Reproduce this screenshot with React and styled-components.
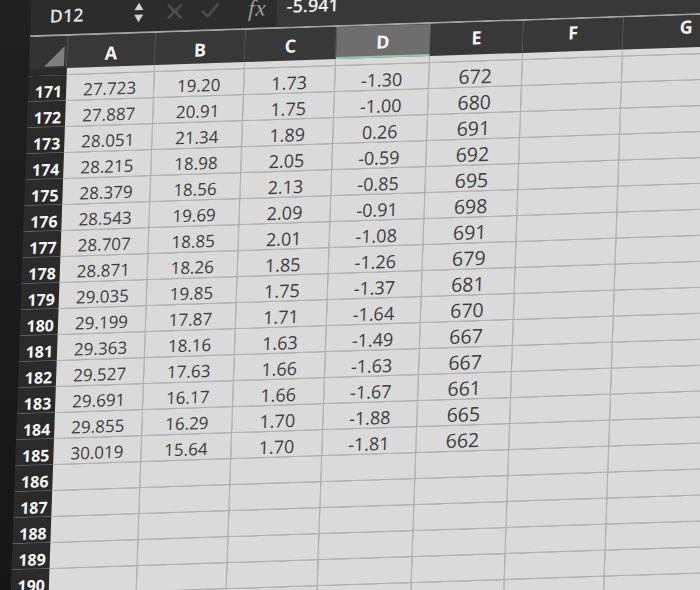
import React from 'react';
import styled, { createGlobalStyle } from 'styled-components';

const GlobalStyle = createGlobalStyle`
  html, body { margin: 0; padding: 0; background: #1b1b1b; overflow: hidden; }
  body { font-family: "Open Sans", "Liberation Sans", sans-serif; }
  * { box-sizing: border-box; }
`;

const COLS = '38px 88px 90px 91px 94px 93px 100px 126px';

const Screen = styled.div`
  width: 700px;
  height: 590px;
  overflow: hidden;
  background: linear-gradient(180deg, #202020 0%, #161616 100%);
`;

/* the photo is taken at an angle: the whole sheet is skewed */
const Sheet = styled.div`
  width: 760px;
  padding-left: 37px;
  transform-origin: 0 0;
  transform: translate(-5.4px, -5.5px) skew(-2deg, -1.9deg);
`;

const FormulaBar = styled.div`
  height: 42px;
  padding-top: 4px;
  display: flex;
  align-items: center;
  background: #2c2c2c;
`;

const NameBox = styled.div`
  width: 120px;
  height: 100%;
  display: flex;
  align-items: center;
  justify-content: space-between;
  padding: 0 7px 0 19px;
  color: #e2e2e2;
  font-size: 18px;
  font-weight: 600;
`;

const ToolIcon = styled.div`
  width: ${p => p.$w}px;
  height: 100%;
  display: flex;
  align-items: center;
  justify-content: ${p => p.$justify || 'center'};
  padding-right: ${p => p.$pr || 0}px;
`;

const Fx = styled.span`
  font-family: "Liberation Serif", "DejaVu Serif", serif;
  font-style: italic;
  font-size: 23px;
  color: #9c9c9c;
  letter-spacing: 1px;
`;

const FormulaInput = styled.div`
  flex: 1;
  align-self: stretch;
  display: flex;
  align-items: center;
  padding: 0 0 0 10px;
  margin: -4px 0 0 0;
  background: #383838;
  color: #f0f0f0;
  font-size: 18px;
  font-weight: 600;
  line-height: 1;
`;

const Row = styled.div`
  display: grid;
  grid-template-columns: ${COLS};
  grid-template-rows: ${p => p.$h}px;
  height: ${p => p.$h}px;
`;

const HeaderRow = styled(Row)`
  border-top: 2px solid #a4a4a4;
  grid-template-rows: ${p => p.$h - 2}px;
`;

const Corner = styled.div`
  position: relative;
  background: #333333;
  border-right: 1px solid #555;
  &::after {
    content: '';
    position: absolute;
    right: 2px;
    bottom: 2px;
    width: 0;
    height: 0;
    border-left: 20px solid transparent;
    border-bottom: 20px solid #7e7e7e;
  }
`;

const ColHead = styled.div`
  display: flex;
  align-items: center;
  justify-content: center;
  padding-top: ${p => Math.max(p.$shift, 0)}px;
  padding-bottom: ${p => Math.max(-p.$shift, 0)}px;
  background: ${p => (p.$selected ? '#6e6e6e' : '#383838')};
  border-right: 1px solid #5a5a5a;
  border-bottom: 2px solid ${p => (p.$selected ? '#8fc7ad' : '#383838')};
  color: #f4f4f4;
  font-size: 18px;
  font-weight: 700;
  line-height: 1;
`;

const RowHead = styled.div`
  display: flex;
  align-items: center;
  justify-content: flex-end;
  padding: 7px 4px 0 0;
  background: #2a2a2a;
  border-bottom: 1px solid ${p => (p.$spacer ? '#bdbdbd' : '#626262')};
  color: #f6f6f6;
  font-size: 16px;
  font-weight: 700;
  line-height: 1;
`;

const Cell = styled.div`
  display: flex;
  align-items: center;
  justify-content: center;
  padding-top: 4px;
  background: #dadada;
  border-right: 1px solid #ababab;
  border-bottom: 1px solid #ababab;
  color: #3e3e3e;
  font-size: ${p => p.$size}px;
  line-height: 1;
`;

const SIZES = [17, 17, 18, 18, 19.5, 19.5, 19.5];
const LETTERS = ['A', 'B', 'C', 'D', 'E', 'F', 'G'];
const HEAD_SHIFT = [6, 5, 4, 2, 0, -4, -8];

const DATA = [
  ['27.723', '19.20', '1.73', '-1.30', '672'],
  ['27.887', '20.91', '1.75', '-1.00', '680'],
  ['28.051', '21.34', '1.89', '0.26', '691'],
  ['28.215', '18.98', '2.05', '-0.59', '692'],
  ['28.379', '18.56', '2.13', '-0.85', '695'],
  ['28.543', '19.69', '2.09', '-0.91', '698'],
  ['28.707', '18.85', '2.01', '-1.08', '691'],
  ['28.871', '18.26', '1.85', '-1.26', '679'],
  ['29.035', '19.85', '1.75', '-1.37', '681'],
  ['29.199', '17.87', '1.71', '-1.64', '670'],
  ['29.363', '18.16', '1.63', '-1.49', '667'],
  ['29.527', '17.63', '1.66', '-1.63', '667'],
  ['29.691', '16.17', '1.66', '-1.67', '661'],
  ['29.855', '16.29', '1.70', '-1.88', '665'],
  ['30.019', '15.64', '1.70', '-1.81', '662'],
];

const rows = Array.from({ length: 23 }, (_, i) => ({
  n: 171 + i,
  vals: DATA[i] || [],
}));

const Stepper = () => (
  <svg width="10" height="22" viewBox="0 0 10 22">
    <polygon points="5,1 9.5,8.5 0.5,8.5" fill="#d2d2d2" />
    <polygon points="0.5,13 9.5,13 5,20.5" fill="#d2d2d2" />
  </svg>
);

const Cross = () => (
  <svg width="16" height="16" viewBox="0 0 16 16">
    <path d="M2 2 L14 14 M14 2 L2 14" stroke="#4e4e4e" strokeWidth="2.6" strokeLinecap="round" />
  </svg>
);

const Check = () => (
  <svg width="19" height="16" viewBox="0 0 19 16">
    <polyline points="2,9 7,14 17,2" fill="none" stroke="#4e4e4e" strokeWidth="2.4" strokeLinecap="round" strokeLinejoin="round" />
  </svg>
);

export default function App() {
  return (
    <>
      <GlobalStyle />
      <Screen>
        <Sheet>
          <FormulaBar>
            <NameBox>
              <span>D12</span>
              <Stepper />
            </NameBox>
            <ToolIcon $w={6} />
            <ToolIcon $w={36}><Cross /></ToolIcon>
            <ToolIcon $w={34}><Check /></ToolIcon>
            <ToolIcon $w={50} $justify="flex-end" $pr={10}><Fx>fx</Fx></ToolIcon>
            <FormulaInput>-5.941</FormulaInput>
          </FormulaBar>

          <HeaderRow $h={34}>
            <Corner />
            {LETTERS.map((l, i) => (
              <ColHead key={l} $selected={l === 'D'} $shift={HEAD_SHIFT[i]}>{l}</ColHead>
            ))}
          </HeaderRow>

          <Row $h={7}>
            <RowHead $spacer />
            {LETTERS.map(l => (
              <Cell key={l} $size={17} />
            ))}
          </Row>

          {rows.map(r => (
            <Row key={r.n} $h={26}>
              <RowHead>{r.n}</RowHead>
              {LETTERS.map((l, i) => (
                <Cell key={l} $size={SIZES[i]}>{r.vals[i] || ''}</Cell>
              ))}
            </Row>
          ))}
        </Sheet>
      </Screen>
    </>
  );
}
